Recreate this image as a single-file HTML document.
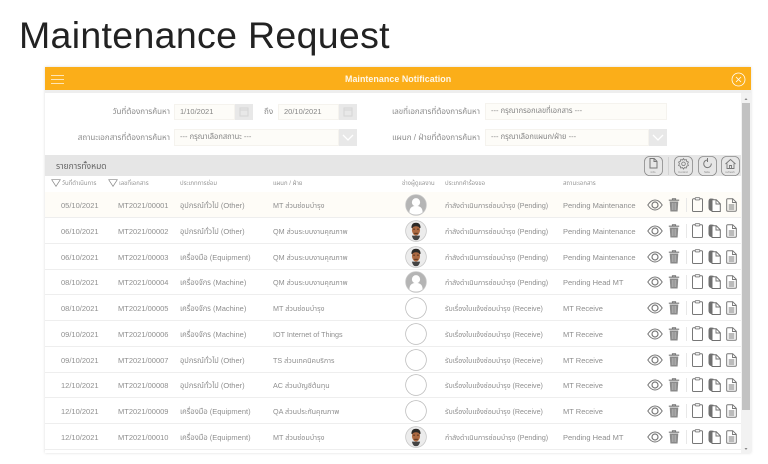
<!DOCTYPE html>
<html lang="th"><head><meta charset="utf-8"><title>Maintenance Request</title>
<style>
html,body{margin:0;padding:0;background:#fff}
body{width:768px;height:464px;position:relative;overflow:hidden;font-family:"Liberation Sans","Noto Sans Thai","Noto Sans CJK SC",sans-serif;color:#7d7d7d;filter:blur(.3px)}
h1{position:absolute;left:19px;top:12px;margin:0;font-weight:400;font-size:37.5px;line-height:46px;letter-spacing:.32px;color:#222;white-space:nowrap}
.a{position:absolute;white-space:nowrap}
#panel{position:absolute;left:45px;top:67px;width:706px;height:386px;background:#fff;box-shadow:0 0 3px rgba(0,0,0,.14)}
#bar{position:absolute;left:45px;top:67px;width:706px;height:23px;background:#fbae19}
#sub{position:absolute;left:45px;top:90px;width:706px;height:3px;background:#eeeeee}
.lb{font-size:8px;line-height:12px;text-align:right;color:#8c8c8c}
.in{background:#fdfcf8;border:1px solid #f5f3ee;box-sizing:border-box;font-size:7.5px;line-height:14px;color:#858585;padding-left:5px}
.bt{background:#e8e8e8}
.rw{position:absolute;left:45px;width:696px;height:26px;border-bottom:1px solid #eeeeee;box-sizing:border-box}
.t{font-size:7.5px;line-height:12px;color:#8f8f8f;margin-top:1px}
.s{font-size:7.1px}
.d{font-size:7.2px}
.h{font-size:6px;line-height:10px;color:#969696;top:179px}
.k{font-size:3px;line-height:4px;color:#888;top:170px;text-align:center;width:18px}
</style></head><body>
<svg width="0" height="0" style="position:absolute">
<defs>
<symbol id="eye" viewBox="0 0 16 12"><path d="M.8 6C3 2.600 5.400 1 8 1s5 1.600 7.200 5C13 9.400 10.600 11 8 11S3 9.400.8 6Z" fill="none" stroke="#777" stroke-width="1"/><circle cx="8" cy="6" r="3" fill="none" stroke="#777" stroke-width="1.200"/></symbol>
<symbol id="trash" viewBox="0 0 12 14"><path d="M.8 2.200h10.400M4.500 2V.8h3V2" fill="none" stroke="#777" stroke-width="1.200"/><path d="M1.700 3.500h8.600l-.7 10H2.400Z" fill="#8a8a8a"/><path d="M4.200 5v7M6 5v7M7.800 5v7" stroke="#c8c8c8" stroke-width=".6"/></symbol>
<symbol id="clip" viewBox="0 0 11 15"><path d="M3.200 1.800H1.500a1 1 0 0 0-1 1v10.700a1 1 0 0 0 1 1h8a1 1 0 0 0 1-1V2.800a1 1 0 0 0-1-1H7.800" fill="none" stroke="#777" stroke-width="1"/><rect x="3.200" y=".7" width="4.600" height="2.200" rx=".6" fill="#fff" stroke="#777" stroke-width=".9"/></symbol>
<symbol id="hand" viewBox="0 0 13 14"><path d="M2.800.5C1 .5.500 2 .500 4v5.500c0 2 1 3.500 3 3.500h2V.8Z" fill="#707070"/><path d="M4 1.800h4.300L12.300 5.800v7.700H4Z" fill="#fff" stroke="#707070" stroke-width="1"/><path d="M8 1.800v4.200h4.300" fill="none" stroke="#707070" stroke-width=".9"/></symbol>
<symbol id="doc" viewBox="0 0 11 14"><path d="M.7 1.700a1 1 0 0 1 1-1h5l3.600 3.600v8a1 1 0 0 1-1 1h-7.600a1 1 0 0 1-1-1Z" fill="none" stroke="#777" stroke-width="1"/><path d="M6.500.9v3.600h3.800M2.700 7h5.600M2.700 9h5.600M2.700 11h5.600" fill="none" stroke="#777" stroke-width=".9"/></symbol>
<symbol id="ava0" viewBox="0 0 24 24"><circle cx="12" cy="12" r="11.300" fill="#b5b5b5" stroke="#c8c8c8" stroke-width=".8"/><circle cx="12" cy="9" r="4.500" fill="#fff"/><path d="M4.800 20c0-5 3-7 7.200-7s7.200 2 7.200 7q-3 2.500-7.200 2.500T4.800 20Z" fill="#fff"/></symbol>
<symbol id="ava1" viewBox="0 0 24 24"><circle cx="12" cy="12" r="11.300" fill="#ececec" stroke="#c4c4c4" stroke-width=".8"/><path d="M7.500 17c1 3.500 2 5 4.500 5s3.500-1.500 4.500-5Z" fill="#444"/><ellipse cx="12" cy="11" rx="4.400" ry="6" fill="#ad6a42"/><path d="M7 8.500C7 4.500 9 3 12 3s5 1.500 5 5.500l-1 .5c-.8-1.800-2.200-2.200-4-2.200S8.800 7.200 8 9Z" fill="#2c2a28"/><path d="M8.800 10h2.200M13 10h2.200M10 14.500h4" stroke="#3a2416" stroke-width=".8"/></symbol>
<symbol id="ava2" viewBox="0 0 24 24"><circle cx="12" cy="12" r="11.300" fill="#fff" stroke="#b8b8b8" stroke-width=".8"/></symbol>
</defs></svg>

<h1>Maintenance Request</h1>
<div id="panel"></div>
<div id="bar"></div><div id="sub"></div>
<svg class="a" style="left:51px;top:75px" width="13" height="9"><path d="M0 .5h13M0 4.500h13M0 8.500h13" stroke="#fff" stroke-width=".8" opacity=".9"/></svg>
<div class="a" style="left:345px;top:73px;font-size:8.900px;line-height:12px;font-weight:700;color:#fff;opacity:.9;letter-spacing:.05px">Maintenance Notification</div>
<svg class="a" style="left:731px;top:72px" width="15" height="15"><circle cx="7.500" cy="7.500" r="6.500" fill="none" stroke="#fff" stroke-width=".8"/><path d="M5 5l5 5M10 5l-5 5" stroke="#fff" stroke-width=".8"/></svg>

<div class="a lb" style="left:60px;width:110px;top:106px">วันที่ต้องการค้นหา</div>
<div class="a in" style="left:174px;top:104px;width:61px;height:16px">1/10/2021</div>
<div class="a bt" style="left:235px;top:104px;width:18px;height:16px"></div>
<svg class="a" style="left:239px;top:107px" width="10" height="10"><rect x="1" y="1" width="8" height="8" fill="none" stroke="#d5d5d5"/><path d="M1 3h8" stroke="#d5d5d5"/></svg>
<div class="a lb" style="left:264px;top:106px">ถึง</div>
<div class="a in" style="left:278px;top:104px;width:61px;height:16px">20/10/2021</div>
<div class="a bt" style="left:339px;top:104px;width:18px;height:16px"></div>
<svg class="a" style="left:343px;top:107px" width="10" height="10"><rect x="1" y="1" width="8" height="8" fill="none" stroke="#d5d5d5"/><path d="M1 3h8" stroke="#d5d5d5"/></svg>

<div class="a lb" style="left:60px;width:110px;top:132px">สถานะเอกสารที่ต้องการค้นหา</div>
<div class="a in" style="left:174px;top:129px;width:165px;height:17px">--- กรุณาเลือกสถานะ ---</div>
<div class="a bt" style="left:339px;top:129px;width:18px;height:17px"></div>
<svg class="a" style="left:342px;top:134px" width="12" height="7"><path d="M1 1l5 5 5-5" fill="none" stroke="#fff" stroke-width="1.300"/></svg>

<div class="a lb" style="left:370px;width:110px;top:106px">เลขที่เอกสารที่ต้องการค้นหา</div>
<div class="a in" style="left:485px;top:103px;width:182px;height:17px">--- กรุณากรอกเลขที่เอกสาร ---</div>
<div class="a lb" style="left:370px;width:110px;top:132px">แผนก / ฝ่ายที่ต้องการค้นหา</div>
<div class="a in" style="left:485px;top:129px;width:164px;height:17px">--- กรุณาเลือกแผนก/ฝ่าย ---</div>
<div class="a bt" style="left:649px;top:129px;width:18px;height:17px"></div>
<svg class="a" style="left:652px;top:134px" width="12" height="7"><path d="M1 1l5 5 5-5" fill="none" stroke="#fff" stroke-width="1.300"/></svg>

<div class="a" style="left:45px;top:155px;width:696px;height:21px;background:#e6e6e6"></div>
<div class="a" style="left:56px;top:160px;font-size:8.500px;line-height:12px;color:#666">รายการทั้งหมด</div>
<svg class="a" style="left:643px;top:155px" width="98" height="22">
<g fill="none" stroke="#8a8a8a" stroke-width=".8"><rect x="1.500" y="1.500" width="18" height="19" rx="5"/><rect x="31.500" y="1.500" width="18" height="19" rx="5"/><rect x="55.500" y="1.500" width="18" height="19" rx="5"/><rect x="78.500" y="1.500" width="18" height="19" rx="5"/></g>
<path d="M25.500 2v18" stroke="#d2d2d2"/>
<g fill="none" stroke="#777" stroke-width="1"><path d="M7 3.500h4.200L14 6.300v6.700H7ZM11 3.500v3h3"/><path d="M40.500 3.600l1 1.400 1.800-.4.400 1.800 1.700.7-.8 1.700.8 1.700-1.700.7-.4 1.800-1.800-.4-1 1.400-1-1.400-1.800.4-.4-1.800-1.700-.7.800-1.700-.8-1.700 1.700-.7.400-1.800 1.800.4Z" stroke-width=".8"/><circle cx="40.500" cy="8.800" r="1.800" stroke-width=".8"/><path d="M68.300 8.500a3.800 3.800 0 1 1-3.800-3.500M64.500 3v4"/><path d="M82.500 9l5-4.500 5 4.500M84 8.500v5h7v-5M86.500 13.500v-3h2v3" stroke-width=".9"/></g>
</svg>
<div class="a k" style="left:644px">info</div>
<div class="a k" style="left:674px">Control</div>
<div class="a k" style="left:698px">Side</div>
<div class="a k" style="left:721px">refresh</div>

<svg class="a" style="left:51px;top:179px" width="10" height="8"><path d="M.7.7h8.600L5 7.300Z" fill="none" stroke="#888" stroke-width=".7"/></svg>
<svg class="a" style="left:108px;top:179px" width="10" height="8"><path d="M.7.7h8.600L5 7.300Z" fill="none" stroke="#888" stroke-width=".7"/></svg>
<div class="a h" style="left:62px">วันที่ดำเนินการ</div>
<div class="a h" style="left:119px">เลขที่เอกสาร</div>
<div class="a h" style="left:180px">ประเภทการซ่อม</div>
<div class="a h" style="left:273px">แผนก / ฝ่าย</div>
<div class="a h" style="left:402px">ช่างผู้ดูแลงาน</div>
<div class="a h" style="left:445px">ประเภทคำร้องขอ</div>
<div class="a h" style="left:563px">สถานะเอกสาร</div>

<div class="rw" style="top:192px;background:#fefcf7"></div>
<div class="rw" style="top:218px"></div><div class="rw" style="top:244px"></div><div class="rw" style="top:269px"></div><div class="rw" style="top:295px"></div><div class="rw" style="top:321px"></div><div class="rw" style="top:347px"></div><div class="rw" style="top:372px"></div><div class="rw" style="top:398px"></div><div class="rw" style="top:424px"></div>

<div class="a t" style="left:61px;top:199px">05/10/2021</div><div class="a t" style="left:118px;top:199px">MT2021/00001</div><div class="a t" style="left:180px;top:199px">อุปกรณ์ทั่วไป (Other)</div><div class="a t d" style="left:273px;top:199px">MT ส่วนซ่อมบำรุง</div><div class="a t s" style="left:445px;top:199px">กำลังดำเนินการซ่อมบำรุง (Pending)</div><div class="a t" style="left:563px;top:199px">Pending Maintenance</div>
<div class="a t" style="left:61px;top:225px">06/10/2021</div><div class="a t" style="left:118px;top:225px">MT2021/00002</div><div class="a t" style="left:180px;top:225px">อุปกรณ์ทั่วไป (Other)</div><div class="a t d" style="left:273px;top:225px">QM ส่วนระบบงานคุณภาพ</div><div class="a t s" style="left:445px;top:225px">กำลังดำเนินการซ่อมบำรุง (Pending)</div><div class="a t" style="left:563px;top:225px">Pending Maintenance</div>
<div class="a t" style="left:61px;top:251px">06/10/2021</div><div class="a t" style="left:118px;top:251px">MT2021/00003</div><div class="a t" style="left:180px;top:251px">เครื่องมือ (Equipment)</div><div class="a t d" style="left:273px;top:251px">QM ส่วนระบบงานคุณภาพ</div><div class="a t s" style="left:445px;top:251px">กำลังดำเนินการซ่อมบำรุง (Pending)</div><div class="a t" style="left:563px;top:251px">Pending Maintenance</div>
<div class="a t" style="left:61px;top:276px">08/10/2021</div><div class="a t" style="left:118px;top:276px">MT2021/00004</div><div class="a t" style="left:180px;top:276px">เครื่องจักร (Machine)</div><div class="a t d" style="left:273px;top:276px">QM ส่วนระบบงานคุณภาพ</div><div class="a t s" style="left:445px;top:276px">กำลังดำเนินการซ่อมบำรุง (Pending)</div><div class="a t" style="left:563px;top:276px">Pending Head MT</div>
<div class="a t" style="left:61px;top:302px">08/10/2021</div><div class="a t" style="left:118px;top:302px">MT2021/00005</div><div class="a t" style="left:180px;top:302px">เครื่องจักร (Machine)</div><div class="a t d" style="left:273px;top:302px">MT ส่วนซ่อมบำรุง</div><div class="a t s" style="left:445px;top:302px">รับเรื่องใบแจ้งซ่อมบำรุง (Receive)</div><div class="a t" style="left:563px;top:302px">MT Receive</div>
<div class="a t" style="left:61px;top:328px">09/10/2021</div><div class="a t" style="left:118px;top:328px">MT2021/00006</div><div class="a t" style="left:180px;top:328px">เครื่องจักร (Machine)</div><div class="a t d" style="left:273px;top:328px">IOT Internet of Things</div><div class="a t s" style="left:445px;top:328px">รับเรื่องใบแจ้งซ่อมบำรุง (Receive)</div><div class="a t" style="left:563px;top:328px">MT Receive</div>
<div class="a t" style="left:61px;top:354px">09/10/2021</div><div class="a t" style="left:118px;top:354px">MT2021/00007</div><div class="a t" style="left:180px;top:354px">อุปกรณ์ทั่วไป (Other)</div><div class="a t d" style="left:273px;top:354px">TS ส่วนเทคนิคบริการ</div><div class="a t s" style="left:445px;top:354px">รับเรื่องใบแจ้งซ่อมบำรุง (Receive)</div><div class="a t" style="left:563px;top:354px">MT Receive</div>
<div class="a t" style="left:61px;top:379px">12/10/2021</div><div class="a t" style="left:118px;top:379px">MT2021/00008</div><div class="a t" style="left:180px;top:379px">อุปกรณ์ทั่วไป (Other)</div><div class="a t d" style="left:273px;top:379px">AC ส่วนบัญชีต้นทุน</div><div class="a t s" style="left:445px;top:379px">รับเรื่องใบแจ้งซ่อมบำรุง (Receive)</div><div class="a t" style="left:563px;top:379px">MT Receive</div>
<div class="a t" style="left:61px;top:405px">12/10/2021</div><div class="a t" style="left:118px;top:405px">MT2021/00009</div><div class="a t" style="left:180px;top:405px">เครื่องมือ (Equipment)</div><div class="a t d" style="left:273px;top:405px">QA ส่วนประกันคุณภาพ</div><div class="a t s" style="left:445px;top:405px">รับเรื่องใบแจ้งซ่อมบำรุง (Receive)</div><div class="a t" style="left:563px;top:405px">MT Receive</div>
<div class="a t" style="left:61px;top:431px">12/10/2021</div><div class="a t" style="left:118px;top:431px">MT2021/00010</div><div class="a t" style="left:180px;top:431px">เครื่องมือ (Equipment)</div><div class="a t d" style="left:273px;top:431px">MT ส่วนซ่อมบำรุง</div><div class="a t s" style="left:445px;top:431px">กำลังดำเนินการซ่อมบำรุง (Pending)</div><div class="a t" style="left:563px;top:431px">Pending Head MT</div>

<svg class="a" style="left:0;top:0" width="768" height="464">
<use href="#ava0" x="405" y="194" width="22" height="22"/>
<use href="#ava1" x="405" y="220" width="22" height="22"/>
<use href="#ava1" x="405" y="246" width="22" height="22"/>
<use href="#ava0" x="405" y="271" width="22" height="22"/>
<use href="#ava2" x="405" y="297" width="22" height="22"/>
<use href="#ava2" x="405" y="323" width="22" height="22"/>
<use href="#ava2" x="405" y="349" width="22" height="22"/>
<use href="#ava2" x="405" y="374" width="22" height="22"/>
<use href="#ava2" x="405" y="400" width="22" height="22"/>
<use href="#ava1" x="405" y="426" width="22" height="22"/>
<g id="ic0"><use href="#eye" x="647" y="199" width="16" height="12"/><use href="#trash" x="668" y="198" width="12" height="14"/><path d="M686.500 198v14" stroke="#e8e8e8"/><use href="#clip" x="692" y="197" width="11" height="15"/><use href="#hand" x="708" y="198" width="13" height="14"/><use href="#doc" x="726" y="198" width="11" height="14"/></g>
<use href="#ic0" y="26"/><use href="#ic0" y="52"/><use href="#ic0" y="77"/><use href="#ic0" y="103"/><use href="#ic0" y="129"/><use href="#ic0" y="155"/><use href="#ic0" y="180"/><use href="#ic0" y="206"/><use href="#ic0" y="232"/>
</svg>

<div class="a" style="left:741px;top:93px;width:10px;height:360px;background:#f2f2f2"></div>
<div class="a" style="left:742px;top:103px;width:8px;height:307px;background:#c2c2c2"></div>
<svg class="a" style="left:742px;top:95px" width="8" height="358"><path d="M2.500 5L4 3l1.500 2ZM2.500 353L4 355l1.500-2Z" fill="#888"/></svg>
</body></html>
